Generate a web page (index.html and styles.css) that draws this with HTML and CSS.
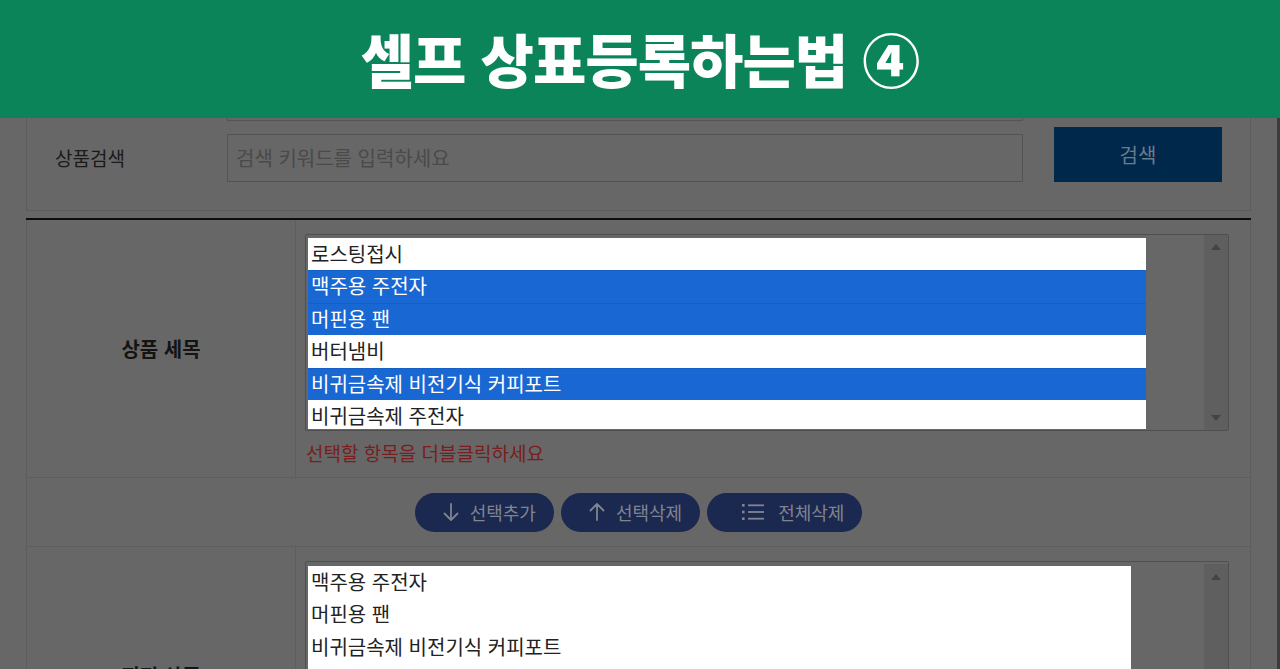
FILE: index.html
```html
<!DOCTYPE html>
<html lang="ko">
<head>
<meta charset="utf-8">
<title>셀프 상표등록하는법 ④</title>
<link rel="stylesheet" href="styles.css">
</head>
<body>
<header class="banner">
  <h1 class="banner-title">셀프 상표등록하는법 ④</h1>
</header>
<div class="page">
  <main class="content">
    <section class="search-panel">
      <div class="prev-row"><span class="prev-input"></span></div>
      <div class="search-row">
        <span class="search-label">상품검색</span>
        <div class="search-input">검색 키워드를 입력하세요</div>
        <button class="search-btn">검색</button>
      </div>
    </section>
    <div class="divider"></div>
    <div class="form-table">
      <div class="row row-list">
        <div class="th">상품 세목</div>
        <div class="td">
          <div class="listbox">
            <ul class="items items-main">
              <li>로스팅접시</li>
              <li class="sel">맥주용 주전자</li>
              <li class="sel">머핀용 팬</li>
              <li>버터냄비</li>
              <li class="sel">비귀금속제 비전기식 커피포트</li>
              <li>비귀금속제 주전자</li>
            </ul>
            <div class="scrollbar">
              <span class="arrow arrow-up"></span>
              <span class="arrow arrow-down"></span>
            </div>
          </div>
          <p class="hint">선택할 항목을 더블클릭하세요</p>
        </div>
      </div>
      <div class="row row-buttons">
        <button class="pill">
          <svg class="pill-icon" viewBox="0 0 24 24" width="24" height="24"><path d="M12 4v16M5.5 13.5L12 20l6.5-6.5" fill="none" stroke="#80848f" stroke-width="1.8" stroke-linecap="round" stroke-linejoin="round"/></svg>
          <span>선택추가</span>
        </button>
        <button class="pill">
          <svg class="pill-icon" viewBox="0 0 24 24" width="24" height="24"><path d="M12 20V4M5.5 10.5L12 4l6.5 6.5" fill="none" stroke="#80848f" stroke-width="1.8" stroke-linecap="round" stroke-linejoin="round"/></svg>
          <span>선택삭제</span>
        </button>
        <button class="pill pill-wide">
          <svg class="pill-icon" viewBox="0 0 24 24" width="24" height="24"><g fill="#80848f"><rect x="1" y="4" width="2.6" height="2.6"/><rect x="1" y="10.7" width="2.6" height="2.6"/><rect x="1" y="17.4" width="2.6" height="2.6"/><rect x="7" y="4.4" width="16" height="1.8"/><rect x="7" y="11.1" width="16" height="1.8"/><rect x="7" y="17.8" width="16" height="1.8"/></g></svg>
          <span>전체삭제</span>
        </button>
      </div>
      <div class="row row-list">
        <div class="th">지정 상품</div>
        <div class="td">
          <div class="listbox listbox-second">
            <ul class="items items-second">
              <li>맥주용 주전자</li>
              <li>머핀용 팬</li>
              <li>비귀금속제 비전기식 커피포트</li>
            </ul>
            <div class="scrollbar">
              <span class="arrow arrow-up"></span>
            </div>
          </div>
        </div>
      </div>
    </div>
  </main>
  <div class="edge"></div>
</div>
</body>
</html>
```

FILE: styles.css
```css
* { box-sizing: border-box; }
html, body { margin: 0; padding: 0; }
body {
  background: #676767;
  font-family: "Noto Sans CJK KR", "Noto Sans", sans-serif;
  width: 1280px;
  height: 669px;
  overflow: hidden;
}

.banner {
  height: 118px;
  background: #0b845a;
  display: flex;
  align-items: center;
  justify-content: center;
}
.banner-title {
  margin: 0;
  padding-bottom: 2px;
  color: #ffffff;
  font-family: "Noto Sans CJK KR", sans-serif;
  font-weight: 900;
  font-size: 58px;
  line-height: 1;
  letter-spacing: -1px;
}

.page {
  display: flex;
  justify-content: space-between;
  height: 551px;
}
.content {
  width: 1260px;
  padding-left: 26px;
}
.edge {
  width: 3px;
  background: #3b3b3b;
}

/* search panel */
.search-panel {
  width: 1225px;
  border: 1px solid #5c5c5c;
  border-top: none;
}
.prev-row {
  height: 3px;
  padding-left: 200px;
}
.prev-input {
  display: block;
  width: 796px;
  height: 3px;
  border: 1px solid #555555;
  border-top: none;
}
.search-row {
  display: flex;
  align-items: flex-end;
  padding: 6px 0 28px 28px;
}
.search-label {
  width: 172px;
  height: 48px;
  line-height: 48px;
  font-size: 19px;
  color: #1a1a1a;
}
.search-input {
  width: 796px;
  height: 48px;
  border: 1px solid #535353;
  padding-left: 8px;
  line-height: 46px;
  font-size: 20px;
  color: #4a4a4a;
}
.search-btn {
  margin-left: 31px;
  width: 168px;
  height: 55px;
  border: none;
  background: #00284b;
  color: #6b7c8d;
  font-family: "Noto Sans CJK KR", sans-serif;
  font-size: 20px;
  padding: 0;
}

.divider {
  width: 1225px;
  height: 2px;
  margin-top: 7px;
  background: #0d0d0d;
}

/* form table */
.form-table {
  width: 1225px;
  border-left: 1px solid #5e5e5e;
  border-right: 1px solid #5e5e5e;
}
.row {
  display: flex;
  border-bottom: 1px solid #5e5e5e;
}
.row-list { height: 258px; }
.th {
  width: 269px;
  flex: none;
  border-right: 1px solid #5e5e5e;
  display: flex;
  align-items: center;
  justify-content: center;
  font-size: 20px;
  font-weight: 700;
  color: #141414;
}
.td {
  flex: 1;
  padding: 14px 0 0 9px;
}

.listbox {
  width: 924px;
  height: 197px;
  border: 1px solid #4f4f4f;
  border-radius: 2px;
  background: #676767;
  display: flex;
  justify-content: space-between;
  padding: 2px 0 1px 2px;
}
.listbox-second { height: 130px; padding-top: 4px; }
.items {
  margin: 0;
  padding: 0;
  list-style: none;
  background: #ffffff;
  overflow: hidden;
  height: 191px;
}
.items-main { width: 838px; margin-top: 1px; }
.items-second { width: 823px; height: 120px; }
.items li {
  height: 32.4px;
  line-height: 31px;
  padding-left: 3px;
  font-size: 20px;
  color: #222222;
  white-space: nowrap;
}
.items li.sel {
  background: #1967d2;
  color: #ffffff;
  box-shadow: inset 0 1px 0 #1460c6;
}
.scrollbar {
  width: 24px;
  background: #5f5f5f;
  display: flex;
  flex-direction: column;
  justify-content: space-between;
  align-items: center;
  padding: 9px 0 9px;
  margin-top: -2px;
  margin-bottom: -1px;
}
.arrow {
  width: 0;
  height: 0;
  border-left: 5px solid transparent;
  border-right: 5px solid transparent;
}
.arrow-up { border-bottom: 6px solid #444444; }
.arrow-down { border-top: 6px solid #444444; }
.listbox-second .scrollbar { padding-top: 10px; }

.hint {
  margin: 8px 0 0 1px;
  font-size: 19px;
  color: #7a1d1d;
}

/* buttons row */
.row-buttons {
  height: 70px;
  align-items: center;
  justify-content: center;
  gap: 7px;
  border-top: 1px solid #5e5e5e;
  margin-top: -1px;
}
.pill {
  height: 39px;
  border: none;
  border-radius: 20px;
  background: #1b2850;
  color: #80848f;
  font-family: "Noto Sans CJK KR", sans-serif;
  font-size: 18px;
  display: flex;
  align-items: center;
  gap: 7px;
  padding: 0 18px 0 24px;
}
.pill-wide {
  gap: 13px;
  padding: 0 18px 0 34px;
}
.pill-icon { display: block; }
```
